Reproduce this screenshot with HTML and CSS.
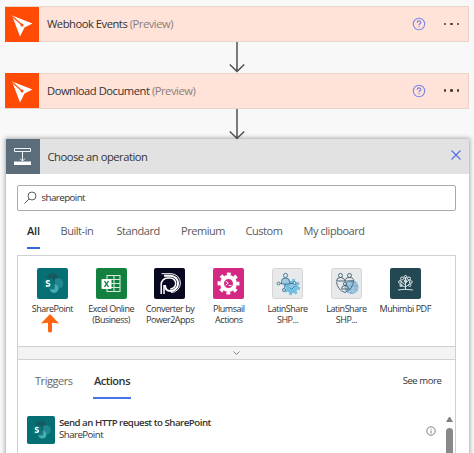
FILE: index.html
```html
<!DOCTYPE html>
<html lang="en">
<head>
<meta charset="utf-8">
<title>Flow designer</title>
<link rel="stylesheet" href="styles.css">
</head>
<body>
<svg class="defs" width="0" height="0" aria-hidden="true">
  <symbol id="plane" viewBox="0 0 34 35"><path d="M7 8.500 27.500 16.500 19.500 20.500 15 29.500 7 8.500Z" fill="#fff"/><path d="m7.500 9.500 9 8" stroke="#ff4b05" stroke-width="1.100"/><circle cx="17" cy="18" r="1.500" fill="#ff4b05"/></symbol>
  <symbol id="help" viewBox="0 0 14 14"><circle cx="7" cy="7" r="5.700" fill="none" stroke="#7e87ea" stroke-width="1.100"/><path d="M5.200 5.700c0-2.400 3.600-2.300 3.600-.2C8.800 6.800 7 6.800 7 8.200M7 9.300v1" fill="none" stroke="#7279dc" stroke-width="1.100"/></symbol>
  <symbol id="down" viewBox="0 0 16 31"><path d="M8 0v30M.8 22.500 8 29.500l7.200-7" fill="none" stroke="#505050" stroke-width="1.500"/></symbol>
  <symbol id="sharepoint" viewBox="0 0 31 31"><rect width="31" height="31" rx="2" fill="#056f73"/><circle cx="15.500" cy="11.500" r="6.300" fill="#17595f"/><circle cx="21" cy="15.500" r="5.300" fill="#21878f"/><circle cx="17" cy="20.500" r="4.400" fill="#45adb4"/><path d="M11 10.500h5.500a1.500 1.500 0 0 1 1.500 1.500v8a1.500 1.500 0 0 1-1.500 1.500H13z" fill="#075459" opacity=".55"/><rect x="6" y="10.500" width="10" height="10" rx="1" fill="#08777b"/><path d="M12.800 13.200c-1.400-.8-3.500-.5-3.500.8 0 1.700 3.500 1.100 3.500 2.700 0 1.600-2.500 1.700-3.900.8" fill="none" stroke="#fff" stroke-width="1.500"/></symbol>
</svg>
<main class="flow">
  <section class="step">
    <span class="step-icon"><svg><use href="#plane"/></svg></span>
    <h2>Webhook Events <small>(Preview)</small></h2>
    <svg class="help"><use href="#help"/></svg><span class="more"><i></i><i></i><i></i></span>
  </section>
  <div class="link"><svg><use href="#down"/></svg></div>
  <section class="step">
    <span class="step-icon"><svg><use href="#plane"/></svg></span>
    <h2>Download Document <small>(Preview)</small></h2>
    <svg class="help"><use href="#help"/></svg><span class="more"><i></i><i></i><i></i></span>
  </section>
  <div class="link"><svg><use href="#down"/></svg></div>
  <section class="panel">
    <header>
      <span class="panel-icon"><svg viewBox="0 0 34 35"><path d="M8.500 9.500h16v3h-16zM16.500 13v9M14 19.500l2.500 2.500 2.500-2.500" fill="none" stroke="#eef3f6" stroke-width="1"/><path d="M8 22.500h17V26H8z" fill="#fff"/></svg></span>
      <h2>Choose an operation</h2>
      <svg class="close" viewBox="0 0 10 10"><path d="m.5.5 9 9m0-9-9 9" stroke="#526be8" stroke-width="1.100"/></svg>
    </header>
    <div class="search"><svg viewBox="0 0 13 13"><circle cx="8" cy="5" r="4" /><path d="m5 8-4.500 4.500"/></svg><span>sharepoint</span></div>
    <nav class="tabs"><span class="on">All</span><span>Built-in</span><span>Standard</span><span>Premium</span><span>Custom</span><span>My clipboard</span></nav>
    <div class="results">
      <div class="apps">
        <div class="app"><svg viewBox="0 0 31 31"><use href="#sharepoint"/></svg><p>SharePoint</p>
          <svg class="pointer" viewBox="0 0 18 19"><path d="M9 0 18 9.500 11 8.800V17q0 1.500-2 1.500T7 17V8.800L0 9.500z" fill="#ff6411"/></svg></div>
        <div class="app"><svg viewBox="0 0 31 31"><rect width="31" height="31" rx="2" fill="#14803f"/><path d="M11 7.500h13v16H11zM11 11.500h13M11 15.500h13M11 19.500h13M18 7.500v16" fill="none" stroke="#d5ecdc" stroke-width="1.100"/><rect x="5.500" y="11" width="10" height="10" rx=".8" fill="#fff"/><path d="m8.500 13.200 4 5.600m0-5.600-4 5.600" stroke="#14803f" stroke-width="1.300"/></svg><p>Excel Online<br>(Business)</p></div>
        <div class="app"><svg viewBox="0 0 31 31"><rect width="31" height="31" rx="2" fill="#080920"/><g fill="none" stroke="#fff"><path d="M7.500 5.700H17a9.300 9.300 0 0 1 0 18.800" stroke-width="1"/><path d="M10 7.800h6.500a7.600 7.600 0 0 1 0 15.200c-3.500 0-5.500-2.500-5.500-6" stroke-width="2"/><path d="M7.200 26V16.500a6.500 6.500 0 0 1 6.500-6.500h2.500a5.300 5.300 0 0 1 0 11M10 26v-9" stroke-width="1.500"/></g></svg><p>Converter by<br>Power2Apps</p></div>
        <div class="app"><svg viewBox="0 0 31 31"><rect width="31" height="31" rx="2" fill="#d42882"/><circle cx="15.500" cy="15.500" r="9.500" fill="none" stroke="#fff" stroke-width="3" stroke-dasharray="3.730 3.730" transform="rotate(-11 15.500 15.500)"/><circle cx="15.500" cy="15.500" r="6.500" fill="none" stroke="#fff" stroke-width="4"/><path d="m12.700 13.200 2.600 2-2.600 2M15.800 17.500h2.700" fill="none" stroke="#fff" stroke-width="1"/></svg><p>Plumsail<br>Actions</p></div>
        <div class="app"><svg viewBox="0 0 31 31"><rect x=".5" y=".5" width="30" height="30" rx="2" fill="#e8e9ea" stroke="#d5d5d5"/><circle cx="20" cy="19" r="4.800" fill="#8cc8e4" stroke="#72bee0" stroke-width="3"/><circle cx="20" cy="19" r="7.200" fill="none" stroke="#72bee0" stroke-width="2" stroke-dasharray="2.830 2.830"/><g fill="#dfe9ef" stroke="#46718c" stroke-width=".9"><path d="M7 15.500h15M13.500 16l-1.500 6"/><circle cx="13.500" cy="7.500" r="2.100"/><path d="M9.500 13.500q0-3.500 4-3.500t4 3.500v2.500h-8z" fill="#9ecbe2"/><circle cx="6.500" cy="15.500" r="1.500"/><circle cx="22.500" cy="15" r="1.500"/><circle cx="12" cy="22" r="1.500"/></g><path d="m17.500 19.500 2 2 3.500-3.500" fill="none" stroke="#2787b6"/></svg><p>LatinShare<br>SHP...</p></div>
        <div class="app"><svg viewBox="0 0 31 31"><rect x=".5" y=".5" width="30" height="30" rx="2" fill="#e8e9ea" stroke="#d5d5d5"/><circle cx="20.500" cy="19" r="7" fill="#86b5d5"/><path d="M14 16h13M14 20h13M16 23h9M18 13v12m4-12v12" stroke="#bad8e8" stroke-width=".7"/><g fill="none" stroke="#425e72" stroke-width=".9"><circle cx="9.500" cy="7.500" r="2"/><circle cx="18.500" cy="7.500" r="2"/><path d="M5.500 13q0-3.500 4-3.500t4.500 3.500q0-3.500 4.500-3.500t4 3.500zM5.500 14q1 8 8.500 10.500Q22 21 22.500 13"/><circle cx="14" cy="15.800" r="1.600"/><path d="M10.500 21q0-3.500 3.500-3.500t4 3.500z"/></g></svg><p>LatinShare<br>SHP...</p></div>
        <div class="app"><svg viewBox="0 0 31 31"><rect width="31" height="31" rx="2" fill="#234854"/><g fill="none" stroke="#e6eff0" stroke-width=".9"><path d="M15.500 22V9M15.500 17l-5-4m5 2 5-4m-5 8 5.500-4M15.500 19 10 17M8 22q7-1.500 15 0"/><circle cx="15.500" cy="9" r="1.500"/><circle cx="12" cy="10.500" r="1.500"/><circle cx="19" cy="10.500" r="1.500"/><circle cx="10" cy="14" r="1.400"/><circle cx="20.800" cy="14" r="1.400"/><circle cx="11" cy="17.300" r="1.200"/><circle cx="19.700" cy="17.300" r="1.200"/><circle cx="15.500" cy="13" r="1.300"/></g></svg><p>Muhimbi PDF</p></div>
      </div>
      <div class="expand"><svg viewBox="0 0 7 4"><path d="m.5.5 3 3 3-3" fill="none" stroke="#858585"/></svg></div>
      <div class="kinds"><span class="triggers">Triggers</span><span class="actions">Actions</span><span class="see">See more</span></div>
      <div class="operation">
        <svg class="logo" viewBox="0 0 31 31"><use href="#sharepoint"/></svg>
        <div class="operation-text"><strong>Send an HTTP request to SharePoint</strong><span>SharePoint</span></div>
        <svg class="info" viewBox="0 0 10 10"><circle cx="5" cy="5" r="4.200" fill="none" stroke="#737373" stroke-width=".9"/><path d="M5 4.500v3M5 2.700v1" stroke="#737373" stroke-width=".9"/></svg>
        <div class="scroll"><i class="up"></i><i class="thumb"></i></div>
      </div>
    </div>
  </section>
</main>
</body>
</html>
```
FILE: styles.css
```css
* { box-sizing: border-box; }
body { margin: 0; width: 474px; height: 453px; overflow: hidden; background: #f8f8f8; color: #333; font-family: "Open Sans", "Noto Sans", sans-serif; }
svg { display: block; flex: none; }
.defs { position: absolute; }
.flow { padding: 6px 5px 0; height: 453px; overflow: hidden; }
.step { display: flex; align-items: center; height: 36px; width: 464px; background: #ffe2d8; border: 1px solid #ead5cb; border-left: 0; }
.step-icon { width: 34px; height: 35px; background: #ff4b05; }
.step-icon svg { width: 34px; height: 35px; }
h2 { margin: 0 auto 0 8px; font-size: 11.200px; font-weight: 400; line-height: 16px; white-space: nowrap; letter-spacing: -.470px; }
h2 small { font-size: inherit; color: #8c7d78; }
.help { width: 14px; height: 14px; margin-right: 18px; }
.more { display: flex; gap: 4px; margin-right: 9px; }
.more i { width: 2.500px; height: 2.500px; border-radius: 50%; background: #473b38; }
.link { height: 30.500px; padding-left: 224px; }
.link svg { width: 16px; height: 31px; }
.panel { width: 463px; height: 330px; margin-left: .5px; background: #fff; box-shadow: 0 0 4px 1px #aaa; }
.panel header { display: flex; height: 35px; background: #e2e2e2; }
.panel-icon { width: 34px; height: 35px; background: #5b6c7a; }
.panel-icon svg { width: 34px; height: 35px; }
.panel h2 { line-height: 35px; }
.close { width: 10px; height: 10px; margin: 11px 8px 0 0; }
.search { display: flex; align-items: center; width: 439px; height: 26px; margin: 10.500px 0 0 11.500px; border: 1px solid #aaa; border-radius: 2px; font-size: 9.800px; letter-spacing: -.6px; padding-left: 6px; gap: 4.500px; }
.search svg { width: 13px; height: 13px; fill: none; stroke: #606060; stroke-width: 1; }
.tabs { display: flex; margin-left: 21.500px; height: 44px; padding-top: 11px; font-size: 11px; letter-spacing: -.450px; line-height: 18px; white-space: nowrap; color: #5a5a5a; }
.tabs span { width: 64.500px; }
.tabs .on { width: 13px; height: 27px; margin-right: 20.500px; font-weight: 600; letter-spacing: -.2px; color: #292929; border-bottom: 2px solid #3468e0; }
.tabs span:nth-child(2) { width: 56px; }
.tabs span:nth-child(5) { width: 58px; }
.results { width: 439px; height: 215px; margin-left: 11.500px; border: 1px solid #d0d0d0; border-bottom: 0; }
.apps { display: grid; grid-template-columns: repeat(7, 58.800px); padding: 12px 0 0 5px; height: 90px; }
.app { position: relative; }
.app > svg { width: 31px; height: 31px; margin: 0 auto; }
.app p { margin: 4px 0 0; text-align: center; font-size: 9px; line-height: 11.300px; letter-spacing: -.470px; white-space: nowrap; }
.app .pointer { position: absolute; left: 18px; top: 46px; width: 18px; height: 19px; }
.expand { height: 14px; background: #f3f3f3; border: solid #d0d0d0; border-width: 1px 0; display: grid; place-items: center; }
.expand svg { width: 7px; height: 4px; }
.kinds { display: flex; height: 56px; padding: 12px 13.500px 0 17px; font-size: 11px; letter-spacing: -.450px; line-height: 18px; white-space: nowrap; color: #666; }
.triggers { width: 58px; }
.actions { width: 38px; height: 27px; padding-left: 1px; color: #333; font-weight: 600; border-bottom: 2px solid #4775ed; }
.see { margin-left: auto; font-size: 9.500px; letter-spacing: -.4px; color: #333; }
.operation { display: flex; height: 38px; padding-left: 9px; }
.logo { width: 28px; height: 28px; }
.operation-text { margin: 1px auto 0 4px; display: flex; flex-direction: column; font-size: 9.700px; line-height: 12.500px; letter-spacing: -.550px; white-space: nowrap; }
.operation-text strong { font-weight: 600; letter-spacing: -.5px; }
.info { width: 10px; height: 10px; margin: 10px 10px 0 0; }
.scroll { width: 7px; margin-right: 2px; padding-top: 1px; }
.scroll i { display: block; }
.up { border: 3.500px solid transparent; border-top: 0; border-bottom: 5px solid #808080; }
.thumb { height: 32px; margin-top: 6px; border-radius: 4px 4px 0 0; background: #898989; }
```
